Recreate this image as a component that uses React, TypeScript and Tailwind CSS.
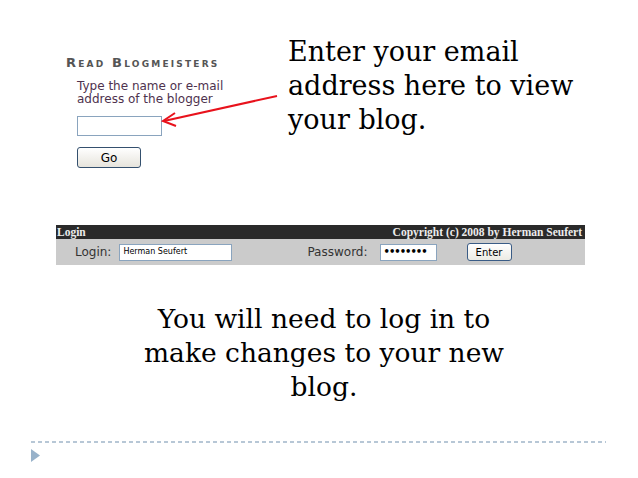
import React from 'react';

const sans = { fontFamily: '"DejaVu Sans", Verdana, sans-serif' };
const bookish = { fontFamily: '"DejaVu Serif", "Bookman Old Style", serif' };

function Arrow() {
  return (
    <svg className="absolute left-0 top-0 pointer-events-none" width="638" height="478" aria-hidden>
      <line x1="277" y1="96" x2="164" y2="121" stroke="#e8121c" strokeWidth="2" />
      <polyline points="175,113 163,121 176,126" fill="none" stroke="#e8121c" strokeWidth="2" strokeLinejoin="miter" />
    </svg>
  );
}

export default function App() {
  return (
    <div className="relative h-[478px] w-[638px] overflow-hidden bg-white">
      {/* top: blog lookup widget + note */}
      <div className="flex h-[168px]">
        <div className="w-[222px] shrink-0 pl-[66px] pt-[56px]" style={sans}>
          <div className="whitespace-nowrap text-[13px] font-bold leading-[14px] tracking-[2.2px] text-[#555555] [font-variant:small-caps]">
            Read Blogmeisters
          </div>
          <div className="ml-[11px] mt-[10px] whitespace-nowrap text-[12px] leading-[13px] text-[#4e324e]">
            Type the name or e-mail
            <br />
            address of the blogger
          </div>
          <div className="ml-[11px] mt-[10px] h-[20px] w-[85px] border border-[#8aa4be] bg-white" />
          <button className="ml-[11px] mt-[11px] flex h-[21px] w-[64px] items-center justify-center rounded-[3px] border border-[#34506e] bg-[linear-gradient(#ffffff,#e6e4dc)] text-[12px] text-black">
            Go
          </button>
        </div>
        <div className="pl-[66px] pt-[35px] text-[27px] leading-[34px] text-black" style={bookish}>
          Enter your email
          <br />
          address here to view
          <br />
          your blog.
        </div>
      </div>

      {/* login bar */}
      <div className="ml-[56px] mt-[57px] w-[529px]">
        <div className="flex h-[14px] items-center justify-between bg-[#2a2a2a] px-[1px] text-[11.5px] font-bold leading-[14px] text-[#ececec]" style={{ fontFamily: '"Liberation Serif", "Times New Roman", serif' }}>
          <span>Login</span>
          <span className="pr-[2px]">Copyright (c) 2008 by Herman Seufert</span>
        </div>
        <div className="flex h-[26px] items-center bg-[#cbcbcb] text-[12px] text-[#333333]" style={sans}>
          <span className="ml-[19px]">Login:</span>
          <div className="ml-[8px] flex h-[17px] w-[113px] items-center border border-[#8aa4be] bg-white pl-[3px] text-[8px] text-black">
            Herman Seufert
          </div>
          <span className="ml-[75px]">Password:</span>
          <div className="ml-[12px] flex h-[17px] w-[57px] items-center border border-[#8aa4be] bg-white pl-[3px] text-[10px] font-bold leading-none tracking-[-1px] text-black">
            ••••••••
          </div>
          <button className="ml-[30px] flex h-[18px] w-[45px] items-center justify-center rounded-[3px] border border-[#3a5c86] bg-[linear-gradient(#ffffff,#ecebe4)] text-[10px] text-black">
            Enter
          </button>
        </div>
      </div>

      {/* bottom note */}
      <div className="mt-[37px] text-center text-[26.5px] leading-[34px] text-black" style={bookish}>
        <div className="ml-[10px]">
          You will need to log in to
          <br />
          make changes to your new
          <br />
          blog.
        </div>
      </div>

      {/* slide footer */}
      <div className="ml-[31px] mt-[37px] h-[2px] w-[575px] bg-[linear-gradient(to_right,#b7c7d6_4px,transparent_4px)] bg-[length:7px_2px]" />
      <svg className="ml-[31px] mt-[6px] block" width="10" height="13" viewBox="0 0 10 13" aria-hidden>
        <polygon points="0,0 9,6.5 0,13" fill="#98b2ca" />
      </svg>

      <Arrow />
    </div>
  );
}
